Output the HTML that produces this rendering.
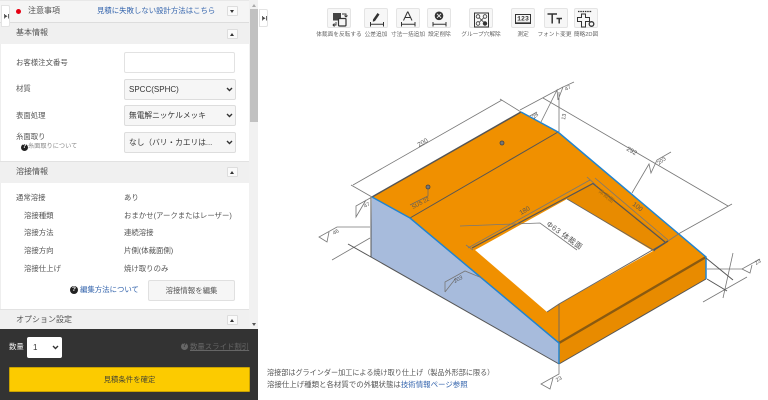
<!DOCTYPE html>
<html lang="ja"><head><meta charset="utf-8">
<style>
html,body{margin:0;padding:0;background:#fff}
body{width:768px;height:400px;position:relative;overflow:hidden;font-family:"Liberation Sans","Noto Sans CJK JP",sans-serif;color:#555;filter:blur(.3px)}
.t{position:absolute;white-space:nowrap;font-size:7.4px;line-height:12px;height:12px}
.b{position:absolute;box-sizing:border-box}
.sec{position:absolute;left:0;width:249px;background:#f0f0f0;box-sizing:border-box}
.mini{position:absolute;left:227px;width:11px;height:10px;background:#fafafa;border:1px solid #ddd;border-radius:1px;box-sizing:border-box}
.mini:after{content:"";position:absolute;left:2px;width:0;height:0;border-left:2.5px solid transparent;border-right:2.5px solid transparent}
.up:after{top:2.5px;border-bottom:3px solid #333}
.dn:after{top:2.5px;border-top:3px solid #333}
.sel{position:absolute;left:124px;width:112px;background:#f6f6f6;border:1px solid #ddd;border-radius:2px;box-sizing:border-box;font-size:8px;color:#333;padding-left:4px;white-space:nowrap}
.sel svg{position:absolute}
.tb{position:absolute;top:8px;height:20px;background:#f7f7f7;border:1px solid #e4e4e4;border-radius:2px;box-sizing:border-box}
.lab{position:absolute;top:30px;font-size:5.7px;line-height:10px;color:#666;white-space:nowrap;transform:translateX(-50%)}
.tog{position:absolute;width:9px;background:#fff;border:1px solid #e3e3e3;box-sizing:border-box;border-radius:0 2px 2px 0}
a{color:#3565ad;text-decoration:none}
</style></head><body>

<!-- left panel -->
<div class="b" style="left:0;top:0;width:249px;height:330px;background:#fff;border-left:1px solid #eee"></div>
<div class="sec" style="top:0;height:23px;background:#f5f5f5;border-top:1px solid #e8e8e8;border-bottom:1px solid #ddd"></div>
<div class="sec" style="top:23px;height:21px"></div>
<div class="b" style="left:16px;top:8.500px;width:5px;height:5px;border-radius:50%;background:#e60012"></div>
<div class="t" style="left:28px;top:5px;font-size:8px">注意事項</div>
<a class="t" style="left:97px;top:5px">見積に失敗しない設計方法はこちら</a>
<div class="mini dn" style="top:6px"></div>
<div class="t" style="left:16px;top:26.500px;font-size:8px">基本情報</div>
<div class="mini up" style="top:29px"></div>

<div class="t" style="left:16px;top:57px">お客様注文番号</div>
<div class="b" style="left:124px;top:52px;width:111px;height:21px;background:#fff;border:1px solid #e2e2e2;border-radius:2px"></div>
<div class="t" style="left:16px;top:83px">材質</div>
<div class="sel" style="top:79px;height:21px;line-height:19px">SPCC(SPHC)<svg style="left:101px;top:7px" width="7" height="5"><path d="M1 1l2.500 2.500L6 1" stroke="#333" stroke-width="1.400" fill="none"/></svg></div>
<div class="t" style="left:16px;top:110px">表面処理</div>
<div class="sel" style="top:105px;height:21px;line-height:19px;font-size:7.700px">無電解ニッケルメッキ<svg style="left:101px;top:7px" width="7" height="5"><path d="M1 1l2.500 2.500L6 1" stroke="#333" stroke-width="1.400" fill="none"/></svg></div>
<div class="t" style="left:16px;top:131px">糸面取り</div>
<div class="b" style="left:21px;top:143.500px;width:7px;height:7px;border-radius:50%;background:#222;color:#fff;font-size:6px;line-height:7px;text-align:center;font-weight:bold">?</div>
<div class="t" style="left:28px;top:141px;font-size:6.200px;color:#888">糸面取りについて</div>
<div class="sel" style="top:132px;height:21px;line-height:19px;font-size:7.700px">なし（バリ・カエリは...<svg style="left:101px;top:7px" width="7" height="5"><path d="M1 1l2.500 2.500L6 1" stroke="#333" stroke-width="1.400" fill="none"/></svg></div>

<div class="sec" style="top:161px;height:22px;border-top:1px solid #e2e2e2"></div>
<div class="t" style="left:16px;top:166px;font-size:8px">溶接情報</div>
<div class="mini up" style="top:167px"></div>
<div class="t" style="left:16px;top:192px">通常溶接</div><div class="t" style="left:124px;top:192px">あり</div>
<div class="t" style="left:24px;top:210px">溶接種類</div><div class="t" style="left:124px;top:210px">おまかせ(アークまたはレーザー)</div>
<div class="t" style="left:24px;top:227px">溶接方法</div><div class="t" style="left:124px;top:227px">連続溶接</div>
<div class="t" style="left:24px;top:245px">溶接方向</div><div class="t" style="left:124px;top:245px">片側(体裁面側)</div>
<div class="t" style="left:24px;top:263px">溶接仕上げ</div><div class="t" style="left:124px;top:263px">焼け取りのみ</div>
<div class="b" style="left:70px;top:286px;width:8px;height:8px;border-radius:50%;background:#222;color:#fff;font-size:6.500px;line-height:8px;text-align:center;font-weight:bold">?</div>
<a class="t" style="left:80px;top:284px">編集方法について</a>
<div class="b" style="left:148px;top:280px;width:87px;height:21px;background:#f6f6f6;border:1px solid #e0e0e0;border-radius:2px;font-size:7.400px;line-height:19px;text-align:center">溶接情報を編集</div>
<div class="sec" style="top:309px;height:21px;border-top:1px solid #e2e2e2"></div>
<div class="t" style="left:16px;top:314px;font-size:8px">オプション設定</div>
<div class="mini up" style="top:315px"></div>

<!-- scrollbar -->
<div class="b" style="left:249px;top:0;width:9px;height:330px;background:#f1f1f1"></div>
<div class="b" style="left:250px;top:9px;width:8px;height:113px;background:#c1c1c1"></div>
<div class="b" style="left:252px;top:4px;border-left:2px solid transparent;border-right:2px solid transparent;border-bottom:3px solid #aaa"></div>
<div class="b" style="left:252px;top:323px;border-left:2px solid transparent;border-right:2px solid transparent;border-top:3px solid #555"></div>

<div class="tog" style="left:1px;top:5px;height:22px"><svg style="position:absolute;left:1.500px;top:8px" width="5" height="5"><path d="M.5 0v4.500M4.500 0v4.500" stroke="#444" stroke-width=".8"/><path d="M1 .8L3.500 2.300 1 3.800z" fill="#444"/></svg></div>
<div class="tog" style="left:259px;top:9px;height:18px"><svg style="position:absolute;left:1.500px;top:6px" width="5" height="5"><path d="M.5 0v4.500M4.500 0v4.500" stroke="#444" stroke-width=".8"/><path d="M1 .8L3.500 2.300 1 3.800z" fill="#444"/></svg></div>

<!-- footer -->
<div class="b" style="left:0;top:329px;width:258px;height:71px;background:#333"></div>
<div class="t" style="left:9px;top:341px;color:#eee">数量</div>
<div class="b" style="left:27px;top:337px;width:35px;height:21px;background:#fff;border-radius:2px;font-size:8px;line-height:21px;color:#333;padding-left:6px">1<svg style="position:absolute;left:25px;top:8px" width="7" height="5"><path d="M1 1l2.500 2.500L6 1" stroke="#333" stroke-width="1.400" fill="none"/></svg></div>
<div class="b" style="left:181px;top:343px;width:7px;height:7px;border-radius:50%;background:#666;color:#333;font-size:6px;line-height:7px;text-align:center;font-weight:bold">?</div>
<div class="t" style="left:190px;top:341px;color:#666;text-decoration:underline;font-size:7.400px">数量スライド割引</div>
<div class="b" style="left:9px;top:367px;width:241px;height:25px;background:#fccb00;border:1px solid #c9a200;border-radius:1px;font-size:7.400px;line-height:23px;text-align:center;color:#443">見積条件を確定</div>

<!-- toolbar -->
<div class="tb" style="left:327px;width:24px"></div>
<div class="tb" style="left:364px;width:24px"></div>
<div class="tb" style="left:396px;width:24px"></div>
<div class="tb" style="left:427px;width:24px"></div>
<div class="tb" style="left:469px;width:24px"></div>
<div class="tb" style="left:511px;width:24px"></div>
<div class="tb" style="left:544px;width:24px"></div>
<div class="tb" style="left:574px;width:24px"></div>
<svg class="b" style="left:320px;top:0" width="290" height="30" fill="none" stroke="#333">
 <rect x="13" y="13" width="8" height="7.500" fill="#444" stroke="none"/><rect x="18.500" y="18.500" width="7.500" height="7.500" rx="1" stroke-width="1.200" fill="#f7f7f7"/>
 <path d="M22 14h4v3M24.500 15.500l1.500 1.500 1.500-1.500M16 22v3h-2.500M14.500 23.500l-1.500 1.500 1.500 1.500" stroke-width=".9"/>
 <path d="M53 19.500l4.500-6.500 2 1.500-4.500 6.500-2.200 .8z" fill="#333" stroke="none"/>
 <path d="M50.500 22v4.500M63.500 22v4.500M50.500 24.300h13" stroke-width="1"/>
 <path d="M83.500 20.500L87.500 12h.5l4 8.500M85 17.500h5.500" stroke-width="1"/>
 <path d="M81.500 22v4.500M95 22v4.500M81.500 24.300h13.500" stroke-width="1"/>
 <circle cx="119" cy="15.800" r="4.300" fill="#333" stroke="none"/><path d="M117 13.800l4 4m0-4l-4 4" stroke="#eee" stroke-width="1"/>
 <path d="M113 22v4.500M126 22v4.500M113 24.300h13" stroke-width="1"/>
 <rect x="154.500" y="13" width="14" height="14" stroke-width="1"/>
 <circle cx="158" cy="16.500" r="1.800" stroke-width=".8"/><circle cx="165" cy="16.500" r="1.800" stroke-width=".8"/><circle cx="158" cy="23.500" r="1.800" stroke-width=".8"/><circle cx="165" cy="23.500" r="1.800" fill="#333" stroke-width=".8"/><path d="M159.500 18l4 4m0-4l-4 4" stroke-width=".8"/>
 <rect x="195.500" y="14.500" width="15" height="9" stroke-width="1"/><path d="M196 22.300h14" stroke-width=".7"/>
 <text x="203" y="20.500" font-size="6.500" fill="#333" stroke="none" text-anchor="middle" font-weight="bold" font-family="Liberation Mono">123</text>
 <path d="M227.500 14h9.500M232.200 14v9.500M236.500 18.500h5.500M239.200 18.500v5" stroke-width="1.500"/>
 <path d="M257.500 17.500h4v-3.500h4v3.500h4v4h-4v5.500h-4v-5.500h-4z" stroke-width="1"/><circle cx="271.500" cy="24" r="2.300" stroke-width="1.300"/>
 <path d="M258 11.500h14" stroke-width="1.200" stroke-dasharray="1.500 .8"/>
</svg>
<div class="lab" style="left:339px">体裁面を反転する</div>
<div class="lab" style="left:376px">公差追加</div>
<div class="lab" style="left:408px">寸法一括追加</div>
<div class="lab" style="left:439.500px">設定削除</div>
<div class="lab" style="left:481px">グループ穴解除</div>
<div class="lab" style="left:523px">測定</div>
<div class="lab" style="left:554.500px">フォント変更</div>
<div class="lab" style="left:586px">簡略2D図</div>

<!-- drawing -->
<svg class="b" style="left:0;top:0" width="768" height="400" fill="none">
 <polygon points="372,197 410,218 559,343 559,364 371,257" fill="#a7bbdc"/>
 <path d="M371,197V257L559,364" stroke="#555" stroke-width="1"/>
 <polygon points="372,197 521,112 558,132 706,257 706,279 559,364 559,343 410,218" fill="#f09000"/>
 <polygon points="559,343 706,257 706,279 559,364" fill="#e88b00"/>
 <polygon points="567,199 593,183 668,241 653,251" fill="#e88b00"/>
 <polygon points="475,250 567,199 653,251 559,304 547,312" fill="#fff"/>
 <path d="M567,199L655,251" stroke="#666" stroke-width=".9"/>
 <path d="M547,312L559,304L668,241" stroke="#666" stroke-width="1"/>
 <path d="M654,250L668,241" stroke="#555" stroke-width="1.600"/>
 <path d="M472,248L593,183.500L665,242" stroke="#555" stroke-width="1.200"/>
 <path d="M410,218L558,132" stroke="#555" stroke-width="1"/>
 <path d="M559,304V343" stroke="#666" stroke-width=".9"/>
 <path d="M559,343L706,257" stroke="#8a5a10" stroke-width="2.400"/>
 <path d="M559,364L706,279" stroke="#555" stroke-width="1"/>
 <path d="M372,197L521,112" stroke="#555" stroke-width="1.500"/>
 <path d="M372,197L410,218L559,343V364M521,112L558,132L706,257V279" stroke="#2184d0" stroke-width="1.500"/>
 <circle cx="428" cy="187" r="2" fill="#777" stroke="#444" stroke-width=".8"/>
 <circle cx="502" cy="143" r="2" fill="#777" stroke="#444" stroke-width=".8"/>
 <path d="M428,189V196L410,205" stroke="#666" stroke-width=".7"/>
 <g stroke="#777" stroke-width=".8">
  <path d="M351,185L372,197M353,185L502,100M500,99L521,112"/>
  <path d="M520,110L563,87M543,98L728,206M732,204L680,233M668,241L680,233"/>
  <path d="M559,132V92M541,122L557,90L558,100L563,87L574,82M528,117L537,112"/>
  <path d="M632,193L649,164L651,173L657,160L671,152"/>
  <path d="M460,226L540,223L577,250"/>
  <path d="M468,248L590,180M466,245L473,250M587,177L597,186"/>
  <path d="M595,178L668,240"/>
  <path d="M707,269H742L760,259M742,269L750,273L752,265"/>
  <path d="M733,253L723,298M703,302L747,277"/>
  <path d="M559,364V374L541,384L550,389L553,378"/>
  <path d="M332,260L370,238"/>
  <path d="M370,227H337L319,237L327,242L329,232"/>
  <path d="M372,197L356,206V217L366,200"/>
  <path d="M445,292V282L465,271L482,278M445,292L456,278"/>
 </g>
 <path d="M348,244L371,257M706,258L733,280M707,279L727,291" stroke="#555" stroke-width="1"/>
 <g fill="#555" font-family="Liberation Sans" font-size="6.500">
  <text transform="translate(419,147) rotate(-30)">200</text>
  <text transform="translate(521,215) rotate(-30)">180</text>
  <text transform="translate(413,209) rotate(-28)" font-size="5.500">SUS 22</text>
  <text transform="translate(626,150) rotate(30)">292</text>
  <text transform="translate(632,205) rotate(38)">100</text>
  <text transform="translate(546,225) rotate(36)" font-size="7.500" letter-spacing=".5" font-family="Liberation Sans,Noto Sans CJK JP">Φ63 体裁面</text>
  <text transform="translate(598,192) rotate(38)" font-size="6" fill="#a86c10" font-family="Liberation Sans,Noto Sans CJK JP">体裁面</text>
  <text transform="translate(566,91) rotate(-30)" font-size="5.500">47</text>
  <text transform="translate(565,120) rotate(-80)" font-size="5.500">13</text>
  <text transform="translate(534,119) rotate(-40)" font-size="5.500">28</text>
  <text transform="translate(659,165) rotate(-38)" font-size="5.500">203</text>
  <text transform="translate(455,283) rotate(-30)" font-size="5.500" font-style="italic">203</text>
  <text transform="translate(334,235) rotate(-30)" font-size="5.500">46</text>
  <text transform="translate(756,265) rotate(-30)" font-size="5.500">23</text>
  <text transform="translate(557,382) rotate(-30)" font-size="5.500">23</text>
  <text transform="translate(365,208) rotate(-30)" font-size="5.500">47</text>
 </g>
</svg>

<div class="t" style="left:267px;top:367px;font-size:7.120px;color:#555">溶接部はグラインダー加工による焼け取り仕上げ（製品外形部に限る）</div>
<div class="t" style="left:267px;top:379px;font-size:7.450px;color:#555">溶接仕上げ種類と各材質での外観状態は<a>技術情報ページ参照</a></div>
</body></html>
